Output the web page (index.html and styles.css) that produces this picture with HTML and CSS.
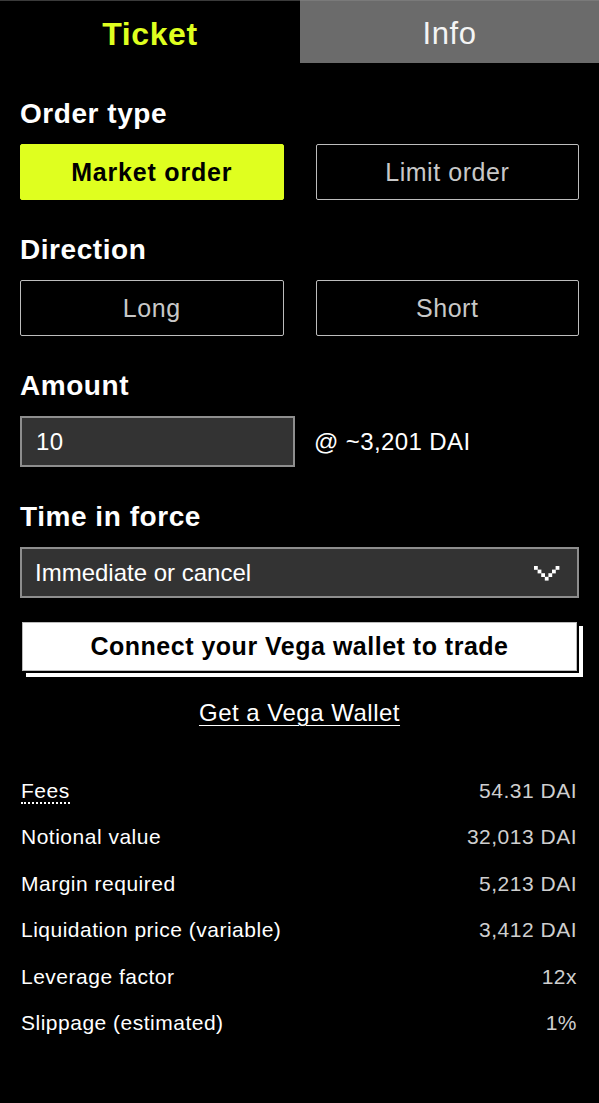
FILE: index.html
```html
<!DOCTYPE html>
<html lang="en">
<head>
<meta charset="utf-8">
<title>Deal ticket</title>
<link rel="stylesheet" href="styles.css">
</head>
<body>
<div class="ticket">
  <nav class="tabs">
    <div class="tab tab-active">Ticket</div>
    <div class="tab tab-inactive">Info</div>
  </nav>
  <main class="form">
    <section class="group">
      <h2 class="label">Order type</h2>
      <div class="toggle">
        <button class="opt opt-selected">Market order</button>
        <button class="opt">Limit order</button>
      </div>
    </section>
    <section class="group">
      <h2 class="label">Direction</h2>
      <div class="toggle">
        <button class="opt">Long</button>
        <button class="opt">Short</button>
      </div>
    </section>
    <section class="group">
      <h2 class="label">Amount</h2>
      <div class="amount-row">
        <div class="field amount-field">10</div>
        <div class="price">@ ~3,201 DAI</div>
      </div>
    </section>
    <section class="group group-last">
      <h2 class="label">Time in force</h2>
      <div class="field select-field">
        <span>Immediate or cancel</span>
        <svg class="chev" width="26" height="15" viewBox="0 0 26 15" aria-hidden="true">
          <rect x="0" y="0" width="3.8" height="3.8" fill="#fff"/>
          <rect x="3.6" y="3.6" width="3.8" height="3.8" fill="#fff"/>
          <rect x="7.2" y="7.2" width="3.8" height="3.8" fill="#fff"/>
          <rect x="10.8" y="10.8" width="3.8" height="3.8" fill="#fff"/>
          <rect x="14.4" y="7.2" width="3.8" height="3.8" fill="#fff"/>
          <rect x="18" y="3.6" width="3.8" height="3.8" fill="#fff"/>
          <rect x="21.6" y="0" width="3.8" height="3.8" fill="#fff"/>
        </svg>
      </div>
    </section>
    <button class="connect">Connect your Vega wallet to trade</button>
    <a class="get-wallet" href="#">Get a Vega Wallet</a>
    <dl class="summary">
      <div class="row"><dt><span class="dotted">Fees</span></dt><dd>54.31 DAI</dd></div>
      <div class="row"><dt>Notional value</dt><dd>32,013 DAI</dd></div>
      <div class="row"><dt>Margin required</dt><dd>5,213 DAI</dd></div>
      <div class="row"><dt>Liquidation price (variable)</dt><dd>3,412 DAI</dd></div>
      <div class="row"><dt>Leverage factor</dt><dd>12x</dd></div>
      <div class="row"><dt>Slippage (estimated)</dt><dd>1%</dd></div>
    </dl>
  </main>
</div>
</body>
</html>
```

FILE: styles.css
```css
* { box-sizing: border-box; }
html, body {
  margin: 0;
  padding: 0;
  background: #000;
  color: #fff;
  font-family: "Liberation Sans", Arial, Helvetica, sans-serif;
}
.ticket {
  width: 599px;
  min-height: 1103px;
  background: #000;
}
.tabs {
  display: grid;
  grid-template-columns: 300px 1fr;
  height: 63px;
}
.tab {
  display: flex;
  align-items: center;
  justify-content: center;
  font-size: 31px;
  letter-spacing: 0.6px;
  padding-top: 4px;
}
.tab-active {
  color: #dfff1f;
  font-weight: bold;
  font-size: 32px;
  border-top: 1px solid #3a3a3a;
}
.tab-inactive {
  background: #6b6b6b;
  color: #f4f4f4;
  border-top: 1px solid #7a7a7a;
}
.form {
  padding: 35px 20px 0 20px;
  display: flex;
  flex-direction: column;
}
.group {
  display: flex;
  flex-direction: column;
  gap: 14px;
  margin-bottom: 34px;
}
.group-last { margin-bottom: 24px; }
.label {
  margin: 0;
  font-size: 28px;
  line-height: 32px;
  font-weight: bold;
  letter-spacing: 0.55px;
}
.toggle {
  display: grid;
  grid-template-columns: 1fr 1fr;
  gap: 32px;
}
.opt {
  height: 56px;
  border: 1px solid #bdbdbd;
  border-radius: 2px;
  background: #000;
  color: #c8c8c8;
  font-family: inherit;
  font-size: 25px;
  letter-spacing: 0.55px;
  padding: 0;
}
.opt-selected {
  background: #dfff1f;
  border-color: #dfff1f;
  color: #000;
  font-weight: bold;
  letter-spacing: 0.8px;
}
.amount-row {
  display: flex;
  align-items: center;
  gap: 19px;
}
.field {
  height: 51px;
  background: #333;
  border: 2px solid #8e8e8e;
  color: #fff;
  font-size: 24px;
  display: flex;
  align-items: center;
  padding: 0 14px;
}
.amount-field { width: 275px; letter-spacing: 0.4px; }
.price {
  font-size: 24px;
  letter-spacing: 0.4px;
  color: #fff;
}
.select-field {
  justify-content: space-between;
  padding-left: 13px;
  padding-right: 17px;
}
.chev { display: block; margin-top: 2px; }
.connect {
  height: 49px;
  background: #fff;
  border: 1px solid #bbb;
  color: #000;
  font-family: inherit;
  font-weight: bold;
  font-size: 25px;
  letter-spacing: 0.5px;
  margin: 0 2px 0 2px;
  padding: 0;
  box-shadow: 1px 1px 0 1px #000, 5px 5px 0 1px #fff;
}
.get-wallet {
  align-self: center;
  margin-top: 28px;
  color: #fff;
  font-size: 24px;
  letter-spacing: 0.5px;
  text-decoration: underline;
  text-underline-offset: 4px;
  text-decoration-thickness: 1px;
}
.summary {
  margin: 51px 2px 0 1px;
  display: flex;
  flex-direction: column;
  gap: 20px;
}
.row {
  display: flex;
  justify-content: space-between;
  font-size: 21px;
  line-height: 26.4px;
  letter-spacing: 0.5px;
}
.row dt { color: #fff; }
.row dd { margin: 0; color: #cfcfcf; }
.dotted {
  display: inline-block;
  line-height: 22px;
  border-bottom: 2px dotted #fff;
}
```
